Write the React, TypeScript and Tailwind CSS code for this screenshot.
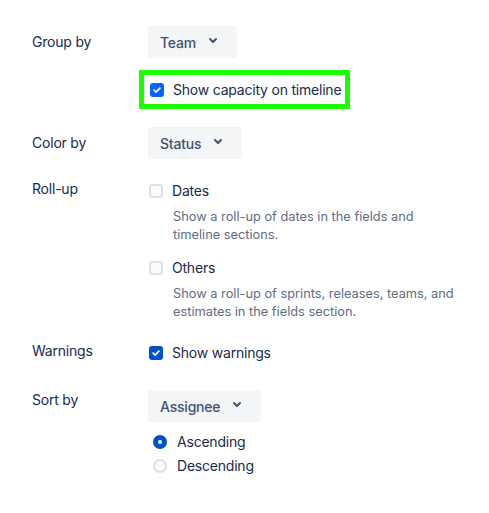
import React from "react";

const font = { fontFamily: "Inter, 'Liberation Sans', sans-serif" };

function Chevron() {
  return (
    <span className="inline-flex w-6 h-6 items-center justify-center">
      <svg width="24" height="24" viewBox="0 0 24 24">
        <path
          fill="#42526e"
          d="M8.292 10.293a1.009 1.009 0 000 1.419l2.939 2.965c.218.215.5.322.779.322s.556-.107.769-.322l2.93-2.955a1.01 1.01 0 000-1.419.987.987 0 00-1.406 0l-2.298 2.317-2.307-2.327a.99.99 0 00-1.406 0z"
        />
      </svg>
    </span>
  );
}

function Dropdown({ value }: { value: string }) {
  return (
    <button className="inline-flex items-center h-8 pl-3 pr-3 rounded-[3px] bg-[#f4f5f7] text-[14px] tracking-[-0.015em] font-medium text-[#42526e]">
      <span>{value}</span>
      <span className="ml-[5px]">
        <Chevron />
      </span>
    </button>
  );
}

function Checkbox({ checked, hover }: { checked?: boolean; hover?: boolean }) {
  if (checked) {
    return (
      <span className={`ml-px inline-flex w-[14px] h-[14px] shrink-0 items-center justify-center rounded-[3px] ${hover ? "bg-[#0065ff]" : "bg-[#0052cc]"}`}>
        <svg width="10" height="10" viewBox="0 0 10 10">
          <path d="M2.2 5.2l1.9 1.9 3.8-3.9" fill="none" stroke="#fff" strokeWidth="1.8" strokeLinecap="round" strokeLinejoin="round" />
        </svg>
      </span>
    );
  }
  return <span className="ml-px inline-block w-[14px] h-[14px] shrink-0 rounded-[3px] border-2 border-[#dfe1e6] bg-[#fafbfc]" />;
}

function CheckRow({ label, checked, hover }: { label: string; checked?: boolean; hover?: boolean }) {
  return (
    <div className="flex items-center h-5">
      <Checkbox checked={checked} hover={hover} />
      <span className="ml-[9px] text-[14px] leading-5 tracking-[-0.015em] text-[#172b4d]">{label}</span>
    </div>
  );
}

function Radio({ label, checked }: { label: string; checked?: boolean }) {
  return (
    <div className="flex items-center h-5 pl-[5px]">
      {checked ? (
        <span className="inline-flex w-[14px] h-[14px] rounded-full bg-[#0052cc] items-center justify-center">
          <span className="w-1 h-1 rounded-full bg-white" />
        </span>
      ) : (
        <span className="inline-block w-[14px] h-[14px] rounded-full border-2 border-[#dfe1e6] bg-[#fafbfc]" />
      )}
      <span className="ml-[10px] text-[14px] leading-5 tracking-[-0.015em] text-[#172b4d]">{label}</span>
    </div>
  );
}

function Label({ children, className = "" }: { children: React.ReactNode; className?: string }) {
  return <div className={`w-[116px] shrink-0 text-[14px] leading-5 tracking-[-0.015em] text-[#172b4d] ${className}`}>{children}</div>;
}

export default function App() {
  return (
    <div className="min-h-[513px] bg-white pl-8 pt-[26px]" style={font}>
      <div className="flex items-center">
        <Label>Group by</Label>
        <Dropdown value="Team" />
      </div>

      <div className="flex mt-3">
        <div className="w-[116px] shrink-0" />
        <div className="-ml-[9px] inline-flex items-center h-[39px] border-[5px] border-[#1cff00] pl-[5px] pr-[4px]">
          <CheckRow label="Show capacity on timeline" checked hover />
        </div>
      </div>

      <div className="flex items-center mt-[18px]">
        <Label>Color by</Label>
        <Dropdown value="Status" />
      </div>

      <div className="flex items-start mt-[22px]">
        <Label className="-mt-0.5">Roll-up</Label>
        <div>
          <CheckRow label="Dates" />
          <p className="mt-[7px] pl-[25px] text-[12.8px] leading-[18px] text-[#5e6c84]">
            Show a roll-up of dates in the fields and
            <br />
            timeline sections.
          </p>
          <div className="mt-[14px]">
            <CheckRow label="Others" />
          </div>
          <p className="mt-[7px] pl-[25px] text-[12.8px] leading-[18px] text-[#5e6c84]">
            Show a roll-up of sprints, releases, teams, and
            <br />
            estimates in the fields section.
          </p>
        </div>
      </div>

      <div className="flex items-start mt-[22px]">
        <Label className="-mt-0.5">Warnings</Label>
        <CheckRow label="Show warnings" checked />
      </div>

      <div className="flex items-start mt-[27px]">
        <Label>Sort by</Label>
        <div>
          <Dropdown value="Assignee" />
          <div className="mt-[10px]">
            <Radio label="Ascending" checked />
          </div>
          <div className="mt-1">
            <Radio label="Descending" />
          </div>
        </div>
      </div>
    </div>
  );
}
